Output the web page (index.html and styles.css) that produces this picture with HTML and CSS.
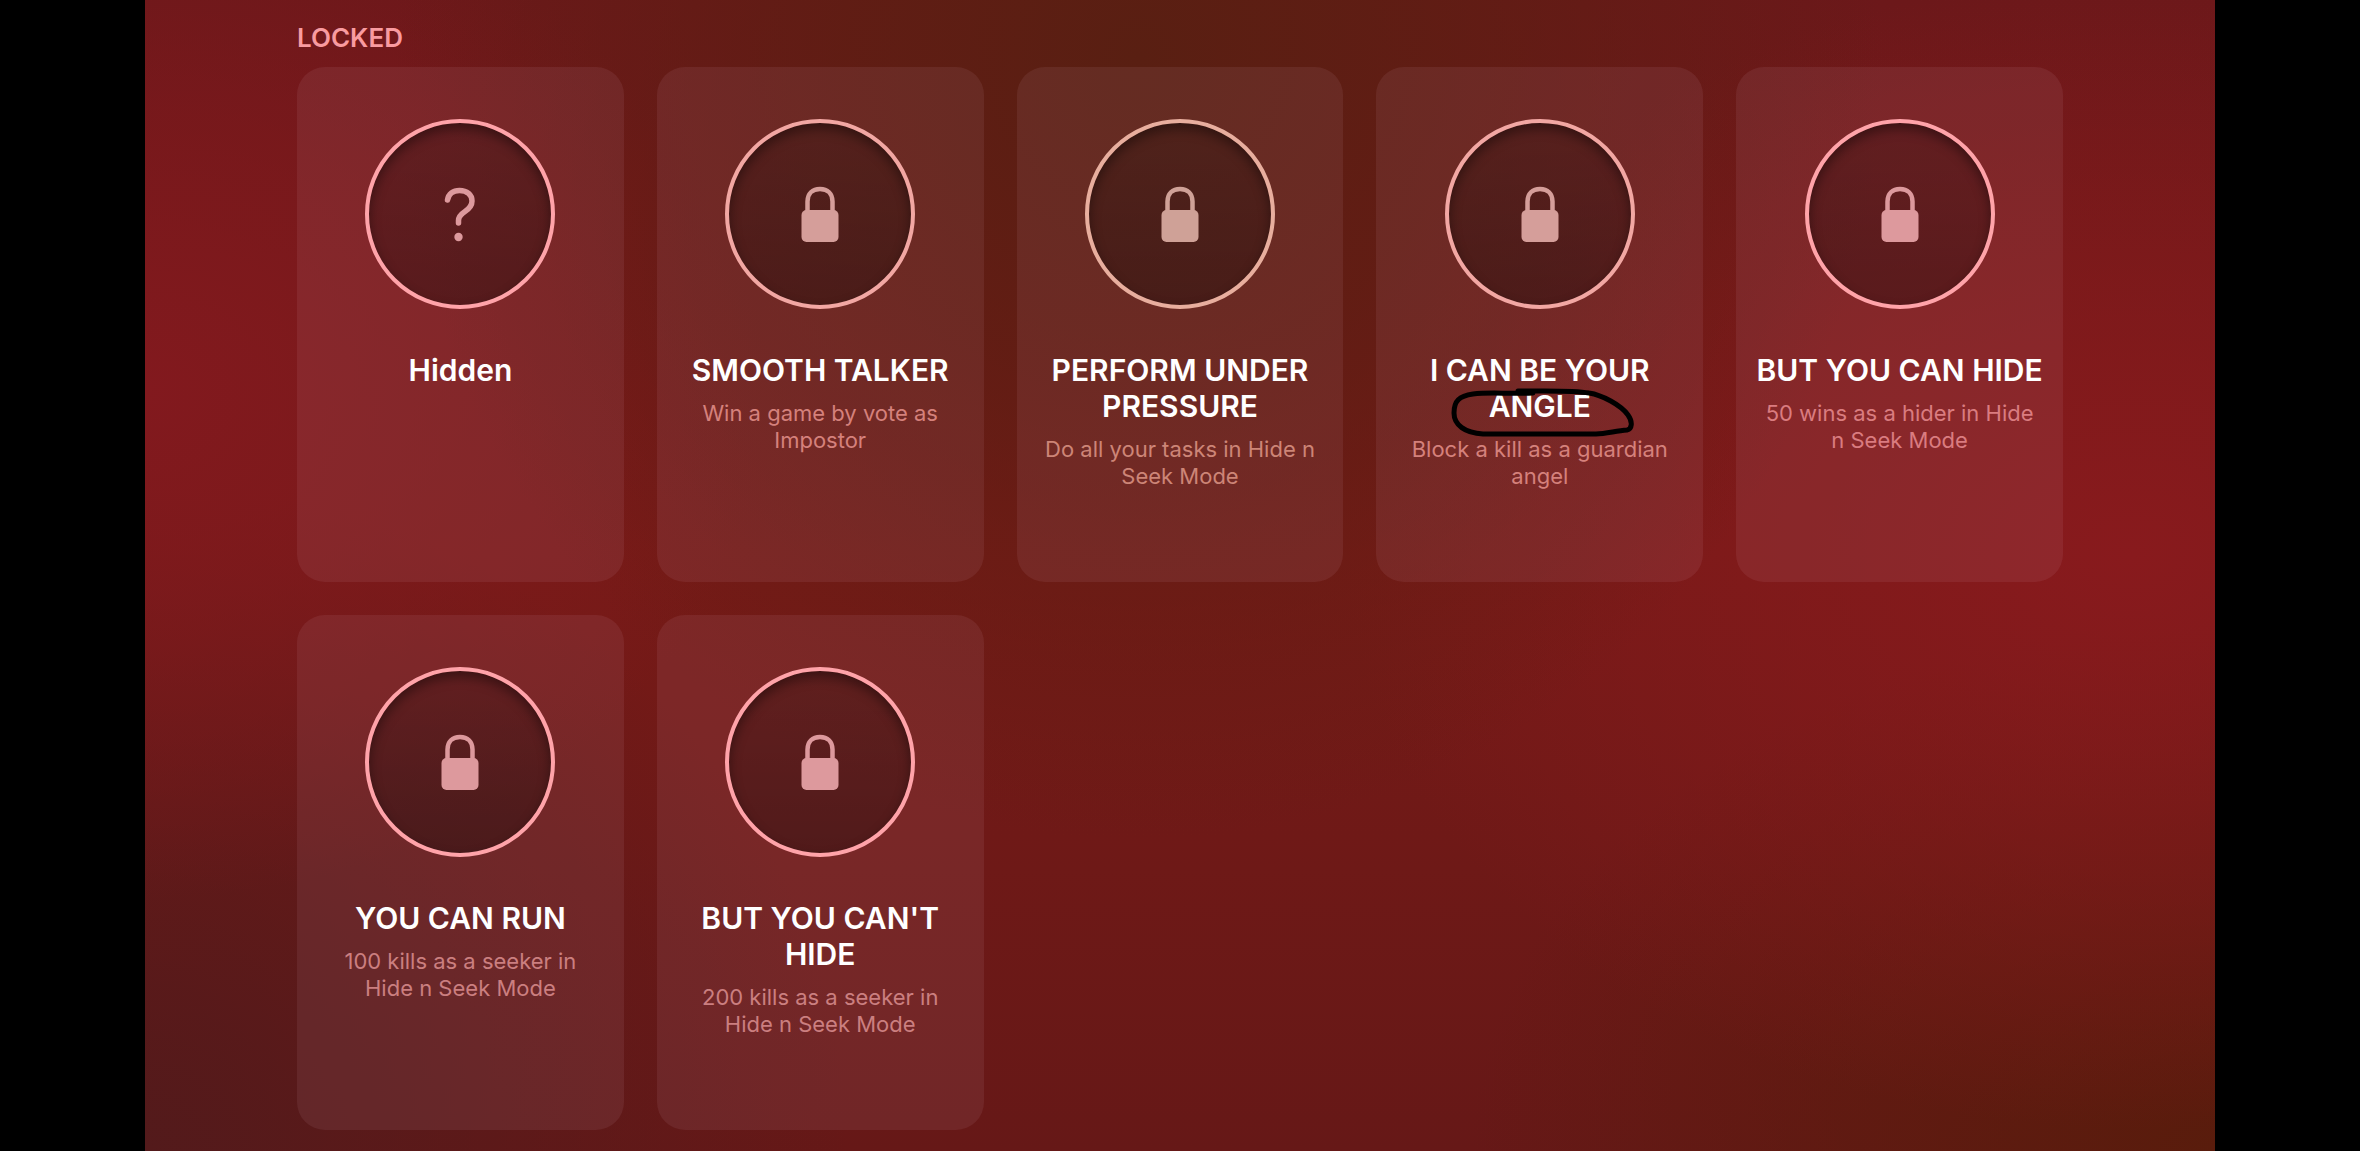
FILE: index.html
```html
<!DOCTYPE html>
<html lang="en">
<head>
    <meta charset="UTF-8">
    <meta name="viewport" content="width=device-width, initial-scale=1.0">
    <title>Achievements</title>
    <link rel="stylesheet" href="styles.css">
</head>
<body>
    <!-- shared icons -->
    <svg class="sprite" aria-hidden="true">
        <symbol id="icon-lock" viewBox="0 0 38 56">
            <path d="M6.500 26V15.500C6.500 7.500 11.500 3 19 3S31.500 7.500 31.500 15.500V26" fill="none" stroke="currentColor" stroke-width="4.500"/>
            <rect x="0.500" y="24" width="37" height="32" rx="5" fill="currentColor"/>
        </symbol>
        <symbol id="icon-question" viewBox="0 0 32 56">
            <path d="M3.500 14C4.500 8 9 4.500 15.500 4.500C23 4.500 28 8.800 28 15C28 20 25.500 22.500 21 25.500C16.500 28.500 14.500 30.500 14.500 34.500V37" fill="none" stroke="currentColor" stroke-width="5.500" stroke-linecap="round" stroke-linejoin="round"/>
            <circle cx="14.500" cy="51" r="4.200" fill="currentColor"/>
        </symbol>
    </svg>

    <main class="panel">
        <h2 class="section-title">LOCKED</h2>

        <div class="achievements">
            <div class="card">
                <div class="badge"><svg class="icon-question"><use href="#icon-question"/></svg></div>
                <h3 class="card-title">Hidden</h3>
            </div>

            <div class="card warm">
                <div class="badge"><svg class="icon-lock"><use href="#icon-lock"/></svg></div>
                <h3 class="card-title">SMOOTH TALKER</h3>
                <p class="card-text">Win a game by vote as Impostor</p>
            </div>

            <div class="card warmest">
                <div class="badge"><svg class="icon-lock"><use href="#icon-lock"/></svg></div>
                <h3 class="card-title">PERFORM UNDER PRESSURE</h3>
                <p class="card-text">Do all your tasks in Hide n Seek Mode</p>
            </div>

            <div class="card warm">
                <div class="badge"><svg class="icon-lock"><use href="#icon-lock"/></svg></div>
                <h3 class="card-title">I CAN BE YOUR <span class="circled">ANGLE<svg class="scribble" viewBox="0 0 184 50" aria-hidden="true"><path d="M82 5C55 6 38 4 22 6C8 8 3 13 3 25C3 37 14 45 32 46H145C155 46 164 43 176 42C181 41 182 34 177 27C170 17 151 7 138 5C122 2 95 3 67 3"/></svg></span></h3>
                <p class="card-text">Block a kill as a guardian angel</p>
            </div>

            <div class="card">
                <div class="badge"><svg class="icon-lock"><use href="#icon-lock"/></svg></div>
                <h3 class="card-title">BUT YOU CAN HIDE</h3>
                <p class="card-text">50 wins as a hider in Hide n Seek Mode</p>
            </div>

            <div class="card muted">
                <div class="badge"><svg class="icon-lock"><use href="#icon-lock"/></svg></div>
                <h3 class="card-title">YOU CAN RUN</h3>
                <p class="card-text">100 kills as a seeker in Hide n Seek Mode</p>
            </div>

            <div class="card muted">
                <div class="badge"><svg class="icon-lock"><use href="#icon-lock"/></svg></div>
                <h3 class="card-title">BUT YOU CAN'T HIDE</h3>
                <p class="card-text">200 kills as a seeker in Hide n Seek Mode</p>
            </div>
        </div>
    </main>
</body>
</html>
```
FILE: styles.css
```css
* {
    margin: 0;
    padding: 0;
    box-sizing: border-box;
}

body {
    font-family: Inter, 'Liberation Sans', sans-serif;
    background: #000;
}

.sprite {
    position: absolute;
    width: 0;
    height: 0;
}

.panel {
    min-height: 100vh;
    margin: 0 145px;
    padding: 22px 152px;
    background:
        radial-gradient(ellipse 36% 68% at 48% 5%, #591f12 0%, rgba(92, 30, 18, 0.75) 40%, rgba(105, 27, 20, 0) 100%),
        radial-gradient(ellipse 38% 50% at 96% 48%, #881a1d 0%, rgba(136, 26, 29, 0) 100%),
        radial-gradient(ellipse 30% 44% at 0% 34%, #82191e 0%, rgba(130, 25, 30, 0) 100%),
        radial-gradient(ellipse 34% 58% at 0% 100%, #531a1b 0%, rgba(83, 26, 27, 0) 100%),
        radial-gradient(ellipse 36% 46% at 100% 100%, #591c0c 0%, rgba(89, 28, 12, 0) 100%),
        linear-gradient(180deg, #6c181a 0%, #771a17 48%, #661817 100%);
}

.section-title {
    color: #f99ba0;
    font-size: 26px;
    font-weight: 600;
    line-height: 32px;
    margin-bottom: 13px;
}

.achievements {
    display: grid;
    grid-template-columns: repeat(5, 1fr);
    gap: 33px;
}

.card {
    --ring: #ffa3a9;
    --glyph: #dd999d;
    --text: #da7c80;
    display: flex;
    flex-direction: column;
    align-items: center;
    min-height: 515px;
    padding: 52px 20px 20px;
    border-radius: 28px;
    background: rgba(245, 210, 235, 0.08);
    text-align: center;
}

.card.warm {
    --ring: #f2a7a3;
    --glyph: #d59e9a;
    --text: #d5817c;
}

.card.warmest {
    --ring: #e8ae9e;
    --glyph: #cfa197;
    --text: #cd8577;
}

.card.muted {
    --text: #cb7f80;
}

.badge {
    display: flex;
    align-items: center;
    justify-content: center;
    width: 190px;
    height: 190px;
    margin-bottom: 43px;
    border: 4px solid var(--ring);
    border-radius: 50%;
    background: linear-gradient(180deg, rgba(0, 0, 0, 0.22), rgba(0, 0, 0, 0.33));
    box-shadow: inset 0 6px 12px rgba(0, 0, 0, 0.4);
    color: var(--glyph);
}

.icon-lock {
    width: 38px;
    height: 56px;
}

.icon-question {
    width: 32px;
    height: 56px;
}

.card-title {
    color: #fff;
    font-size: 30px;
    font-weight: 600;
    line-height: 36px;
}

.card-text {
    margin-top: 12px;
    padding: 0 4px;
    color: var(--text);
    font-size: 22px;
    line-height: 27px;
}

.circled {
    position: relative;
}

/* hand-drawn loop around the word */
.scribble {
    position: absolute;
    top: 0;
    left: -38px;
    width: 184px;
    height: 50px;
    fill: none;
    stroke: #000;
    stroke-width: 5;
    stroke-linecap: round;
    stroke-linejoin: round;
}
```
